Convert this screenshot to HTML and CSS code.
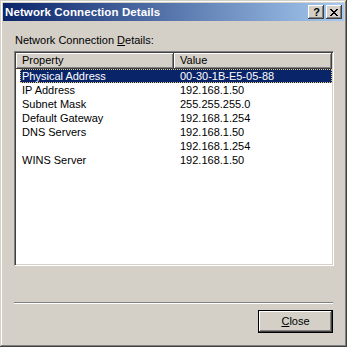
FILE: index.html
```html
<!DOCTYPE html>
<html>
<head>
<meta charset="utf-8">
<link rel="stylesheet" href="styles.css">
</head>
<body>
<div class="window">
  <div class="titlebar">
    <span class="title">Network Connection Details</span>
    <div class="capbtns">
      <div class="capbtn help">?</div>
      <div class="capbtn close">
        <svg width="8" height="7" viewBox="0 0 8 7" shape-rendering="crispEdges">
          <path d="M0 0h2v1h-2zM6 0h2v1h-2zM1 1h2v1h-2zM5 1h2v1h-2zM2 2h4v1h-4zM3 3h2v1h-2zM2 4h4v1h-4zM1 5h2v1h-2zM5 5h2v1h-2zM0 6h2v1h-2zM6 6h2v1h-2z" fill="#000"/>
        </svg>
      </div>
    </div>
  </div>
  <div class="content">
    <div class="label">Network Connection <u>D</u>etails:</div>
    <div class="listview">
      <div class="header">
        <div class="hcell">Property</div>
        <div class="hcell">Value</div>
      </div>
      <div class="rows">
        <div class="row selected"><span class="prop">Physical Address</span><span class="val">00-30-1B-E5-05-88</span></div>
        <div class="row"><span class="prop">IP Address</span><span class="val">192.168.1.50</span></div>
        <div class="row"><span class="prop">Subnet Mask</span><span class="val">255.255.255.0</span></div>
        <div class="row"><span class="prop">Default Gateway</span><span class="val">192.168.1.254</span></div>
        <div class="row"><span class="prop">DNS Servers</span><span class="val">192.168.1.50</span></div>
        <div class="row"><span class="prop"></span><span class="val">192.168.1.254</span></div>
        <div class="row"><span class="prop">WINS Server</span><span class="val">192.168.1.50</span></div>
      </div>
    </div>
    <div class="separator"></div>
    <div class="buttons">
      <div class="button"><span><u>C</u>lose</span></div>
    </div>
  </div>
</div>
</body>
</html>
```
FILE: styles.css
```css
html, body {
  margin: 0;
  padding: 0;
  background: #D4D0C8;
}
body {
  font-family: "Liberation Sans", Arial, sans-serif;
  font-size: 11px;
  color: #000;
}
.window {
  width: 347px;
  height: 347px;
  box-sizing: border-box;
  padding: 3px;
  background: #D4D0C8;
  box-shadow: inset -1px -1px #404040, inset 1px 1px #D4D0C8, inset -2px -2px #808080, inset 2px 2px #FFFFFF;
  display: flex;
  flex-direction: column;
}
.titlebar {
  height: 18px;
  background: linear-gradient(to right, #0A246A, #A6CAF0);
  display: flex;
  align-items: center;
  justify-content: space-between;
  padding-left: 2px;
}
.title {
  color: #fff;
  font-weight: bold;
  font-size: 11.5px;
  line-height: 18px;
  letter-spacing: 0.1px;
}
.capbtns {
  display: flex;
  gap: 2px;
  margin-right: 2px;
}
.capbtn {
  width: 16px;
  height: 14px;
  box-sizing: border-box;
  background: #D4D0C8;
  box-shadow: inset -1px -1px #404040, inset 1px 1px #FFFFFF, inset -2px -2px #808080;
  display: flex;
  align-items: center;
  justify-content: center;
}
.help {
  font-weight: bold;
  font-size: 11px;
  line-height: 14px;
  padding-left: 1px;
}
.close svg {
  display: block;
}
.content {
  display: flex;
  flex-direction: column;
  padding: 13px 10px 0 11px;
}
.label {
  height: 13px;
  line-height: 13px;
  margin-left: 1px;
  margin-bottom: 4px;
}
.label u, .button u {
  text-decoration: underline;
  text-underline-offset: 1px;
}
.listview {
  width: 320px;
  height: 215px;
  box-sizing: border-box;
  background: #fff;
  border-style: solid;
  border-width: 1px;
  border-color: #808080 #FFFFFF #FFFFFF #808080;
  box-shadow: inset 1px 1px #404040, inset -1px -1px #D4D0C8;
  padding: 1px;
  display: flex;
  flex-direction: column;
}
.header {
  display: grid;
  grid-template-columns: 158px 1fr;
  height: 16px;
}
.hcell {
  background: #D4D0C8;
  box-shadow: inset -1px -1px #404040, inset 1px 1px #FFFFFF, inset -2px -2px #808080;
  padding-left: 6px;
  line-height: 15px;
}
.rows {
  display: flex;
  flex-direction: column;
}
.row {
  display: grid;
  grid-template-columns: 154px 1fr;
  margin-left: 4px;
  height: 14px;
  line-height: 14px;
}
.prop {
  padding-left: 2px;
}
.val {
  padding-left: 6px;
}
.row.selected {
  background: #0A246A;
  color: #fff;
  outline: 1px dotted #E8C878;
  outline-offset: -1px;
}
.separator {
  margin-top: 36px;
  width: 319px;
  border-top: 1px solid #808080;
  border-bottom: 1px solid #FFFFFF;
  height: 0;
}
.buttons {
  display: flex;
  justify-content: flex-end;
  margin-top: 6px;
  padding-right: 1px;
}
.button {
  width: 75px;
  height: 23px;
  box-sizing: border-box;
  border: 1px solid #000;
  background: #D4D0C8;
  box-shadow: inset -1px -1px #404040, inset 1px 1px #FFFFFF, inset -2px -2px #808080;
  display: flex;
  align-items: center;
  justify-content: center;
  line-height: 13px;
}
```
